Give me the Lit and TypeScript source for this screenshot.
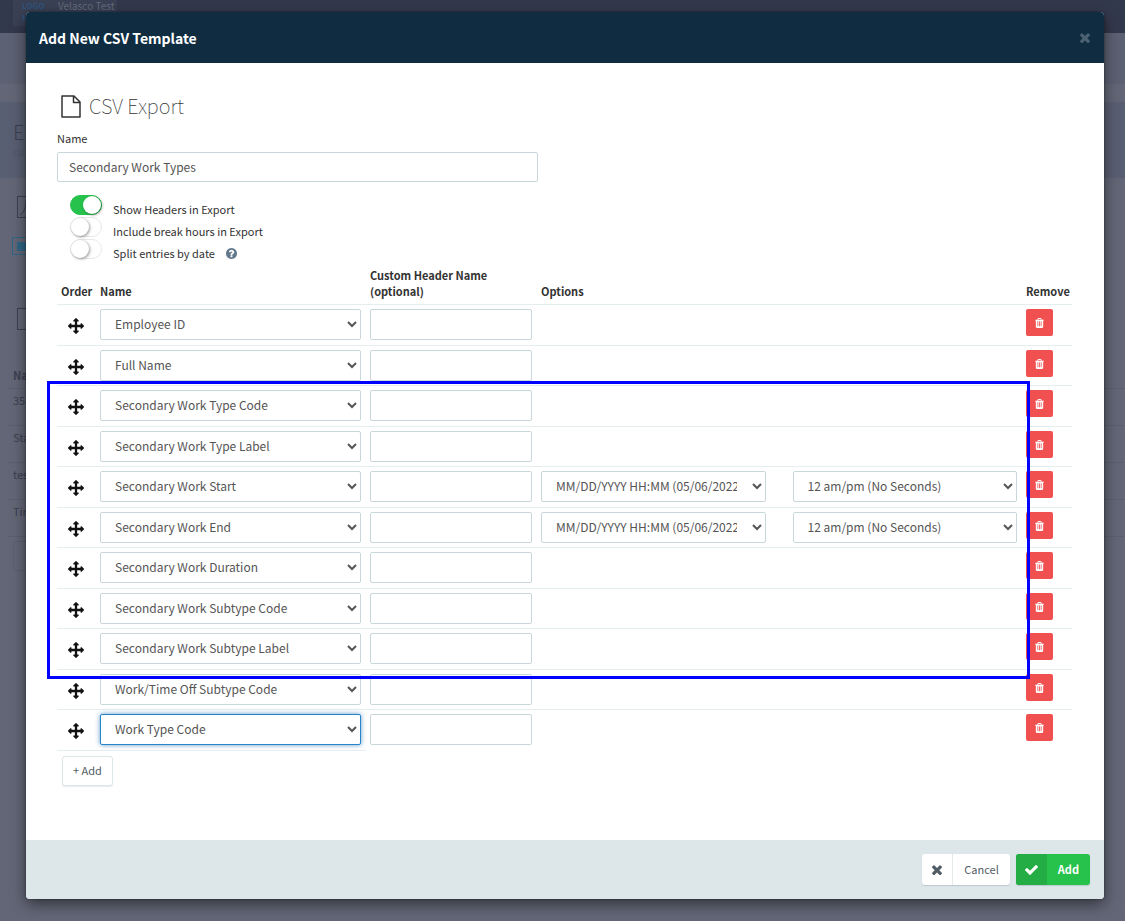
import { LitElement, html, css, svg, nothing } from "lit";
import { customElement, state } from "lit/decorators.js";

interface Row {
  name: string;
  dated?: boolean;
  active?: boolean;
}

const ROWS: Row[] = [
  { name: "Employee ID" },
  { name: "Full Name" },
  { name: "Secondary Work Type Code" },
  { name: "Secondary Work Type Label" },
  { name: "Secondary Work Start", dated: true },
  { name: "Secondary Work End", dated: true },
  { name: "Secondary Work Duration" },
  { name: "Secondary Work Subtype Code" },
  { name: "Secondary Work Subtype Label" },
  { name: "Work/Time Off Subtype Code" },
  { name: "Work Type Code", active: true },
];

const TOGGLES = [
  { id: "headers", label: "Show Headers in Export", on: true, help: false },
  { id: "breaks", label: "Include break hours in Export", on: false, help: false },
  { id: "split", label: "Split entries by date", on: false, help: true },
];

const icon = (cls: string, box: string, body: unknown) =>
  html`<svg class=${cls} viewBox=${box} aria-hidden="true">${body}</svg>`;

const fileIcon = icon(
  "file",
  "0 0 20 23",
  svg`<path d="M1 1h12l6 6v15H1z M12.500 1v6.500H19" fill="none" stroke="currentColor" stroke-width="1.500" stroke-linejoin="round"/>`
);
const moveIcon = icon(
  "move",
  "0 0 1792 1792",
  svg`<path fill="currentColor" d="M1792 896q0 26-19 45l-256 256q-19 19-45 19t-45-19-19-45v-128h-384v384h128q26 0 45 19t19 45-19 45l-256 256q-19 19-45 19t-45-19l-256-256q-19-19-19-45t19-45 45-19h128v-384h-384v128q0 26-19 45t-45 19-45-19l-256-256q-19-19-19-45t19-45l256-256q19-19 45-19t45 19 19 45v128h384v-384h-128q-26 0-45-19t-19-45 19-45l256-256q19-19 45-19t45 19l256 256q19 19 19 45t-19 45-45 19h-128v384h384v-128q0-26 19-45t45-19 45 19l256 256q19 19 19 45z"/>`
);
const trashIcon = icon(
  "trash",
  "0 0 1408 1536",
  svg`<path fill="currentColor" d="M512 1248v-704q0-14-9-23t-23-9h-64q-14 0-23 9t-9 23v704q0 14 9 23t23 9h64q14 0 23-9t9-23zm256 0v-704q0-14-9-23t-23-9h-64q-14 0-23 9t-9 23v704q0 14 9 23t23 9h64q14 0 23-9t9-23zm256 0v-704q0-14-9-23t-23-9h-64q-14 0-23 9t-9 23v704q0 14 9 23t23 9h64q14 0 23-9t9-23zm-544-992h448l-48-117q-7-9-17-11h-317q-10 2-17 11zm928 32v64q0 14-9 23t-23 9h-96v948q0 83-47 143.500t-113 60.500h-832q-66 0-113-58.500t-47-141.500v-952h-96q-14 0-23-9t-9-23v-64q0-14 9-23t23-9h309l70-167q15-37 54-63t79-26h320q40 0 79 26t54 63l70 167h309q14 0 23 9t9 23z"/>`
);
const timesIcon = icon(
  "times",
  "110 238 1188 1188",
  svg`<path fill="currentColor" d="M1298 1214q0 40-28 68l-136 136q-28 28-68 28t-68-28l-294-294-294 294q-28 28-68 28t-68-28l-136-136q-28-28-28-68t28-68l294-294-294-294q-28-28-28-68t28-68l136-136q28-28 68-28t68 28l294 294 294-294q28-28 68-28t68 28l136 136q28 28 28 68t-28 68l-294 294 294 294q28 28 28 68z"/>`
);
const checkIcon = icon(
  "check",
  "121 334 1550 1188",
  svg`<path fill="currentColor" d="M1671 566q0 40-28 68l-724 724-136 136q-28 28-68 28t-68-28l-136-136-362-362q-28-28-28-68t28-68l136-136q28-28 68-28t68 28l294 295 656-657q28-28 68-28t68 28l136 136q28 28 28 68z"/>`
);
const helpIcon = icon(
  "help",
  "0 0 1536 1536",
  svg`<path fill="currentColor" d="M896 1248v-192q0-14-9-23t-23-9h-192q-14 0-23 9t-9 23v192q0 14 9 23t23 9h192q14 0 23-9t9-23zm256-672q0-88-55.500-163t-138.500-116-170-41q-243 0-371 213-15 24 8 42l132 100q7 6 19 6 16 0 25-12 53-68 86-92 34-24 86-24 48 0 85.500 26t37.500 59q0 38-20 61t-68 45q-63 28-115.500 86.500t-52.500 125.500v36q0 14 9 23t23 9h192q14 0 23-9t9-23q0-19 21.500-49.500t54.500-49.500q32-18 49-28.500t46-35 44.500-48 28-60.500 12.500-81zm384 192q0 209-103 385.500t-279.500 279.500-385.500 103-385.500-103-279.500-279.500-103-385.500 103-385.500 279.500-279.500 385.500-103 385.500 103 279.500 279.500 103 385.500z"/>`
);

@customElement("page-behind")
export class PageBehind extends LitElement {
  static styles = css`
    :host {
      display: block;
      min-height: 100vh;
      background: #636676;
      color: #3b4052;
      font-size: 12px;
      line-height: 16px;
    }
    .nav {
      display: flex;
      height: 33px;
      background: #33394c;
    }
    .brand {
      display: flex;
      gap: 12px;
      align-items: flex-start;
      height: 26px;
      margin-left: 13px;
      padding: 0 3px 0 9px;
      background: #3a4155;
      color: #646a7b;
      font-size: 10px;
      line-height: 12px;
    }
    .logo {
      width: 24px;
      color: #2f547c;
      font-size: 8px;
      font-weight: 700;
      line-height: 12px;
    }
    .sub {
      height: 51px;
      background: #5c6173;
    }
    .title {
      height: 76px;
      margin-top: 18px;
      padding: 18px 13px 0;
      box-sizing: border-box;
      background: #595f72;
    }
    .title h1 {
      margin: 0;
      font-size: 20px;
      font-weight: 300;
      line-height: 24px;
    }
    .title p {
      margin: 0;
      color: #505669;
      font-size: 10px;
    }
    .content {
      padding: 18px 0 0 8px;
    }
    .glyph {
      display: block;
      width: 20px;
      height: 22px;
      margin-left: 9px;
      box-sizing: border-box;
      border: 1px solid #3b4052;
    }
    .glyph svg {
      display: block;
      width: 18px;
      height: 20px;
    }
    .chip {
      width: 40px;
      height: 18px;
      margin: 19px 0 53px 4px;
      padding: 4px;
      box-sizing: border-box;
      border: 1px solid #2f6686;
    }
    .chip span {
      display: block;
      height: 9px;
      background: #2f6686;
    }
    .list {
      margin: 37px 0 0;
      padding: 0;
      list-style: none;
      font-size: 11px;
    }
    .list li {
      height: 37px;
      padding: 3px 5px 0;
      box-sizing: border-box;
      border-top: 1px solid #5b5f70;
    }
    .list .head {
      height: 21px;
      padding-top: 0;
      border-top: 0;
      font-weight: 700;
    }
    .more {
      width: 40px;
      height: 30px;
      margin: -32px 0 0 5px;
      box-sizing: border-box;
      border: 1px solid #5b5f70;
      border-radius: 3px;
    }
  `;

  render() {
    return html`
      <div class="nav">
        <div class="brand"><span class="logo">LOGO HERE</span><span>Velasco Test</span></div>
      </div>
      <div class="sub"></div>
      <div class="title">
        <h1>E</h1>
        <p>cu</p>
      </div>
      <div class="content">
        <span class="glyph">
          <svg viewBox="0 0 18 20" aria-hidden="true">
            <path d="M2 18C6 16 8 10 8 3" fill="none" stroke="currentColor" />
          </svg>
        </span>
        <div class="chip"><span></span></div>
        <span class="glyph"></span>
        <ul class="list">
          <li class="head">Na</li>
          <li>35</li>
          <li>Sta</li>
          <li>tes</li>
          <li>Tin</li>
          <li></li>
        </ul>
        <div class="more"></div>
      </div>
    `;
  }
}

@customElement("app-root")
export class AppRoot extends LitElement {
  @state() rows = ROWS;

  static styles = css`
    :host {
      display: grid;
      min-height: 100vh;
      font-family: "Noto Sans CJK SC", "Open Sans", sans-serif;
      font-size: 11px;
      line-height: 16px;
      color: #333;
    }
    * {
      box-sizing: border-box;
    }
    page-behind,
    .modal {
      grid-area: 1 / 1;
    }
    page-behind {
      height: 100vh;
      overflow: hidden;
    }
    .modal {
      display: flex;
      flex-direction: column;
      z-index: 1;
      margin: 12px 21px 22px 26px;
      border-radius: 4px;
      background: #fff;
      box-shadow: 0 5px 15px rgba(0, 0, 0, 0.5), 0 0 2px rgba(0, 0, 0, 0.5);
      overflow: hidden;
    }
    .top {
      display: flex;
      align-items: center;
      justify-content: space-between;
      height: 51px;
      padding: 0 13px;
      background: #0f2c41;
      color: #fff;
    }
    .top h2 {
      margin: 0;
      font-size: 14px;
      font-weight: 700;
      line-height: 20px;
    }
    button {
      font: inherit;
      cursor: pointer;
    }
    .close {
      display: flex;
      padding: 1px;
      border: 0;
      background: none;
      color: #4c6172;
    }
    .times {
      width: 10px;
      height: 10px;
    }
    .body {
      flex: 1;
      padding: 30px 32px 0 31px;
    }
    .heading {
      display: flex;
      align-items: center;
      gap: 8px;
      margin: 0 0 11px 4px;
      font-size: 20px;
      font-weight: 100;
      line-height: 26px;
    }
    .file {
      width: 20px;
      height: 23px;
    }
    .caption {
      display: block;
      margin-bottom: 6px;
    }
    input[type="text"],
    select {
      display: block;
      width: 100%;
      height: 31px;
      border: 1px solid #c8d7d9;
      border-radius: 2px;
      background-color: #fff;
      color: #555;
      font: inherit;
      font-size: 12px;
      line-height: 20px;
      outline: none;
    }
    input[type="text"] {
      padding: 4px 11px 6px;
    }
    .title-input[type="text"] {
      width: 481px;
      max-width: 100%;
      height: 30px;
      margin-bottom: 13px;
    }
    select {
      padding: 3px 12px 5px 10px;
    }
    select.active {
      border-color: #2485c9;
      box-shadow: 0 0 5px rgba(36, 110, 180, 0.7);
    }
    .toggles {
      display: grid;
      margin-left: 13px;
    }
    .toggle {
      display: flex;
      align-items: flex-start;
      gap: 11px;
      height: 22px;
    }
    .switch {
      appearance: none;
      flex: none;
      width: 32px;
      height: 20px;
      margin: 0;
      border: 1px solid #e6e8e8;
      border-radius: 10px;
      background: #fff;
    }
    .switch::before {
      content: "";
      display: block;
      width: 18px;
      height: 18px;
      border-radius: 50%;
      background: #fff;
      box-shadow: 1px 1px 3px rgba(0, 0, 0, 0.4);
    }
    .switch:checked {
      border-color: #27c24c;
      background: #27c24c;
    }
    .switch:checked::before {
      margin-left: 12px;
    }
    .toggle label {
      padding-top: 6px;
    }
    .help {
      width: 11px;
      height: 11px;
      margin-top: 9px;
      color: #62788c;
    }
    .table-wrap {
      position: relative;
      margin-top: 6px;
    }
    table {
      width: 100%;
      border-collapse: separate;
      border-spacing: 0;
      table-layout: fixed;
    }
    .c-order {
      width: 39px;
    }
    .c-name {
      width: 270px;
    }
    .c-custom {
      width: 171px;
    }
    .c-remove {
      width: 50px;
    }
    th {
      padding: 0 4px 5px;
      font-weight: 700;
      text-align: left;
      vertical-align: bottom;
      white-space: nowrap;
    }
    td {
      padding: 4px 5px 5px 4px;
      border-top: 1px solid #e6edee;
      vertical-align: top;
    }
    tr:nth-child(even) td {
      padding-bottom: 4px;
    }
    .grip {
      display: flex;
      justify-content: center;
      padding-top: 9px;
      color: #111;
    }
    .move {
      width: 16px;
      height: 16px;
    }
    .options {
      display: grid;
      grid-template-columns: 1fr 1fr;
      gap: 27px;
    }
    .remove {
      display: flex;
      align-items: center;
      justify-content: center;
      width: 27px;
      height: 27px;
      padding: 0;
      border: 0;
      border-radius: 2px;
      background: #f05050;
      color: #fff;
    }
    .trash {
      width: 9px;
      height: 10px;
    }
    .mark {
      position: absolute;
      top: 114px;
      right: 42px;
      left: -10px;
      height: 298px;
      border: 3px solid #00f;
      pointer-events: none;
    }
    .below {
      width: 309px;
      padding: 5px;
      border-top: 1px solid #e6edee;
    }
    .add-row {
      height: 30px;
      padding: 0 10px 2px;
      border: 1px solid #dde6e9;
      border-radius: 3px;
      background: #fff;
      color: #515d66;
      box-shadow: 0 1px 1px rgba(90, 120, 120, 0.15);
    }
    .foot {
      display: flex;
      align-items: center;
      justify-content: flex-end;
      gap: 6px;
      height: 59px;
      padding: 0 14px;
      background: #dde6e9;
    }
    .btn {
      display: flex;
      height: 31px;
      padding: 0;
      border: 0;
      border-radius: 3px;
      background: #fff;
      color: #515d66;
      line-height: 31px;
      box-shadow: 0 1px 1px rgba(90, 110, 120, 0.25);
      overflow: hidden;
    }
    .btn .ico {
      display: grid;
      place-items: center;
      width: 31px;
      height: 31px;
      border-right: 1px solid #e4eaec;
    }
    .btn .txt {
      padding: 0 11px;
    }
    .btn.ok {
      background: #27c24c;
      color: #fff;
      font-weight: 700;
    }
    .btn.ok .ico {
      border: 0;
      background: #23ad44;
    }
    .check {
      width: 13px;
      height: 10px;
    }
  `;

  private row(r: Row, i: number) {
    return html`
      <tr>
        <td><div class="grip">${moveIcon}</div></td>
        <td>
          <select class=${r.active ? "active" : ""} aria-label="Name of column ${i + 1}">
            <option>${r.name}</option>
          </select>
        </td>
        <td><input type="text" aria-label="Custom header name of column ${i + 1}" /></td>
        <td>
          ${r.dated
            ? html`<div class="options">
                <select aria-label="Date format">
                  <option>MM/DD/YYYY HH:MM (05/06/2022 13:30)</option>
                </select>
                <select aria-label="Time format">
                  <option>12 am/pm (No Seconds)</option>
                </select>
              </div>`
            : nothing}
        </td>
        <td><button class="remove" aria-label="Remove column ${i + 1}">${trashIcon}</button></td>
      </tr>
    `;
  }

  render() {
    return html`
      <page-behind aria-hidden="true"></page-behind>
      <div class="modal" role="dialog" aria-labelledby="dialog-title">
        <div class="top">
          <h2 id="dialog-title">Add New CSV Template</h2>
          <button class="close" aria-label="Close">${timesIcon}</button>
        </div>
        <div class="body">
          <h3 class="heading">${fileIcon}CSV Export</h3>
          <label class="caption" for="name">Name</label>
          <input class="title-input" id="name" type="text" .value=${"Secondary Work Types"} />
          <div class="toggles">
            ${TOGGLES.map(
              (t) => html`<div class="toggle">
                <input class="switch" type="checkbox" role="switch" id=${t.id} ?checked=${t.on} />
                <label for=${t.id}>${t.label}</label>
                ${t.help ? helpIcon : nothing}
              </div>`
            )}
          </div>
          <div class="table-wrap">
            <table>
              <colgroup>
                <col class="c-order" />
                <col class="c-name" />
                <col class="c-custom" />
                <col />
                <col class="c-remove" />
              </colgroup>
              <thead>
                <tr>
                  <th>Order</th>
                  <th>Name</th>
                  <th>Custom Header Name<br />(optional)</th>
                  <th>Options</th>
                  <th>Remove</th>
                </tr>
              </thead>
              <tbody>
                ${this.rows.map((r, i) => this.row(r, i))}
              </tbody>
            </table>
            <div class="mark"></div>
          </div>
          <div class="below"><button class="add-row">+ Add</button></div>
        </div>
        <div class="foot">
          <button class="btn"><span class="ico">${timesIcon}</span><span class="txt">Cancel</span></button>
          <button class="btn ok"><span class="ico">${checkIcon}</span><span class="txt">Add</span></button>
        </div>
      </div>
    `;
  }
}
